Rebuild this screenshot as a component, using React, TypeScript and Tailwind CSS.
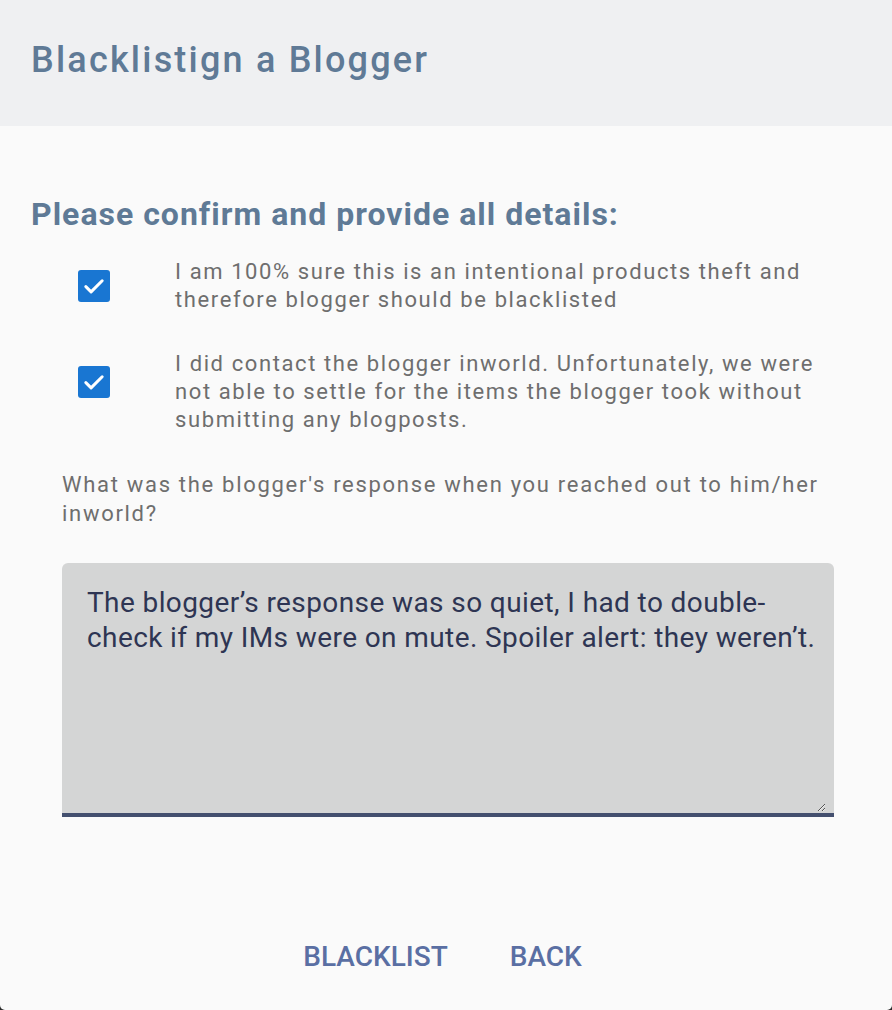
import { useState } from 'react';

function CheckBox({ checked, onToggle }: { checked: boolean; onToggle: () => void }) {
  return (
    <button
      type="button"
      onClick={onToggle}
      className={`flex h-8 w-8 shrink-0 items-center justify-center rounded-[3px] ${
        checked ? 'bg-[#1976d2]' : 'border-2 border-[#757575] bg-transparent'
      }`}
    >
      {checked && (
        <svg viewBox="0 0 24 24" className="h-7 w-7" fill="none" stroke="white" strokeWidth={2.6}>
          <path d="M5 12.5l4.5 4.5L19 7.5" strokeLinecap="round" strokeLinejoin="round" />
        </svg>
      )}
    </button>
  );
}

export default function App() {
  const [sure, setSure] = useState(true);
  const [contacted, setContacted] = useState(true);

  return (
    <div className="bg-[#2b2b2b]">
      <div className="flex h-[1010px] w-[892px] flex-col overflow-hidden rounded-b-[5px] bg-[#fafafa] font-['Roboto',sans-serif]">
        {/* Header */}
        <div className="h-[126px] shrink-0 bg-[#eff0f2] px-[31px] pt-[40px]">
          <h1 className="text-[36px] font-medium leading-[40px] tracking-[2.2px] text-[#5f7a96]">
            Blacklistign a Blogger
          </h1>
        </div>

        {/* Body */}
        <div className="flex flex-1 flex-col px-[31px] pt-[70px]">
          <h2 className="text-[32px] font-bold leading-[36px] tracking-[1px] text-[#5f7a96]">
            Please confirm and provide all details:
          </h2>

          <div className="mt-[26px] flex items-start pl-[47px] pr-[27px]">
            <div className="mt-[12px]">
              <CheckBox checked={sure} onToggle={() => setSure(!sure)} />
            </div>
            <p className="ml-[65px] text-[22px] leading-[28.3px] tracking-[1.6px] text-[#6e6e6e]">
              I am 100% sure this is an intentional products theft and therefore blogger should be
              blacklisted
            </p>
          </div>

          <div className="mt-[35px] flex items-start pl-[47px] pr-[27px]">
            <div className="mt-[16px]">
              <CheckBox checked={contacted} onToggle={() => setContacted(!contacted)} />
            </div>
            <p className="ml-[65px] text-[22px] leading-[28.3px] tracking-[1.6px] text-[#6e6e6e]">
              I did contact the blogger inworld. Unfortunately, we were not able to settle for the
              items the blogger took without submitting any blogposts.
            </p>
          </div>

          <p className="mt-[37px] pl-[31px] pr-[27px] text-[22px] leading-[28.3px] tracking-[1.7px] text-[#6e6e6e]">
            What was the blogger's response when you reached out to him/her inworld?
          </p>

          <div className="ml-[31px] mr-[27px] mt-[35px] flex h-[254px] flex-col rounded-t-[6px] border-b-[4px] border-[#434f6e] bg-[#d4d5d5] pb-[1px] pl-[25px] pr-[8px] pt-[22px]">
            <textarea
              defaultValue="The blogger’s response was so quiet, I had to double-check if my IMs were on mute. Spoiler alert: they weren’t."
              className="block w-full flex-1 resize-y bg-transparent text-[28px] leading-[35px] tracking-[0.4px] text-[#2e3553] outline-none"
            />
          </div>

          <div className="mt-auto mb-[37px] flex justify-center gap-[62px] pr-[7px]">
            <button type="button" className="text-[28px] font-medium leading-[32px] text-[#5a6fa3]">
              BLACKLIST
            </button>
            <button type="button" className="text-[28px] font-medium leading-[32px] text-[#5a6fa3]">
              BACK
            </button>
          </div>
        </div>
      </div>
    </div>
  );
}
